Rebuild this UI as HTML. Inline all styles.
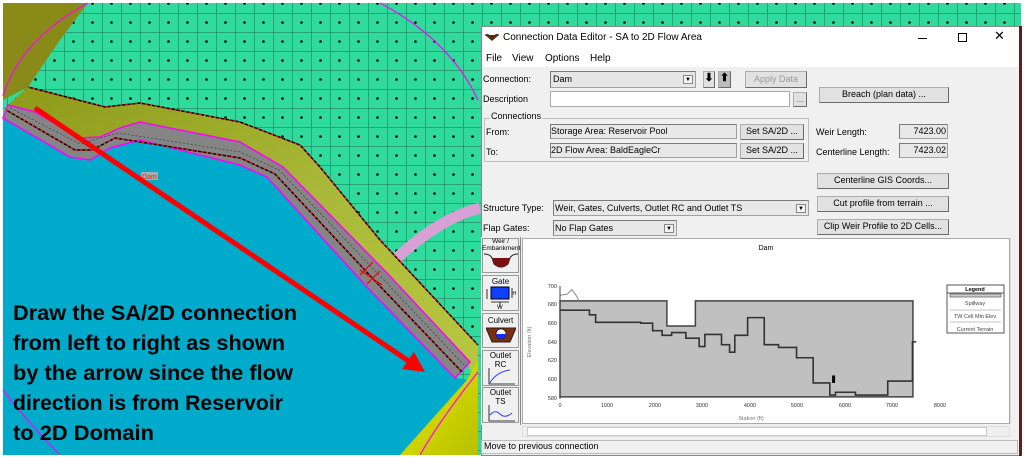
<!DOCTYPE html>
<html><head><meta charset="utf-8"><style>
*{margin:0;padding:0;box-sizing:border-box}
body{width:1024px;height:458px;overflow:hidden;background:#fff;position:relative;font-family:"Liberation Sans",Arial,sans-serif}
.a{position:absolute}
.t{position:absolute;font-size:9px;color:#000;white-space:nowrap;line-height:11px}
.box{position:absolute;background:#e8e8e8;border:1px solid #a0a0a0;border-top-color:#7a7a7a;border-left-color:#7a7a7a}
.btn{position:absolute;background:#e1e1e1;border:1px solid #adadad;border-right-color:#6a6a6a;border-bottom-color:#6a6a6a;font-size:9px;text-align:center;line-height:13px;white-space:nowrap}
.dd{position:absolute;right:2px;top:3px;width:10px;height:9px;border:1px solid #888;background:#f4f4f4;font-size:6px;line-height:8px;text-align:center}
</style></head><body>
<svg class="a" style="left:0;top:0" width="1024" height="458" viewBox="0 0 1024 458">
<defs>
<pattern id="g" patternUnits="userSpaceOnUse" x="64" y="13" width="19" height="19">
<rect width="19" height="19" fill="#2fdb9c"/>
<path d="M0 0H19M0 0V19" stroke="#1f6a4c" stroke-width="1"/>
<circle cx="9.5" cy="9.5" r="1.3" fill="#000"/>
</pattern>
<linearGradient id="ol" x1="0" y1="0" x2="1" y2="1"><stop offset="0" stop-color="#8c9a18"/><stop offset=".5" stop-color="#aab838"/><stop offset="1" stop-color="#b8c840"/></linearGradient>
<linearGradient id="yl" x1="0" y1="0" x2="1" y2="1"><stop offset="0" stop-color="#e8e800"/><stop offset="1" stop-color="#b8c000"/></linearGradient>
</defs>
<rect x="3" y="3" width="1018" height="452" fill="url(#g)"/>
<path d="M480 208 Q440 218 397 258" stroke="#d9a0d6" stroke-width="11" fill="none"/>
<path d="M3 3H88L60 40L28 87L3 100Z" fill="#8a8a18"/>
<path d="M3 96 Q20 40 88 3" stroke="#ff00ff" stroke-width="1.2" fill="none"/>
<path d="M380 3 Q450 40 478 100" stroke="#ff00ff" stroke-width="1.2" fill="none"/>
<path d="M28 87L105 107L140 103L240 122L300 145L320 167L380 240L478 345L478 395L468 362L387 273L283 167L240 142L140 122L120 128L100 137L80 138L35 112L8 105Z" fill="url(#ol)"/>
<path d="M28 87L105 107L140 103L240 122L300 145L320 167L380 240L478 345" stroke="#000" stroke-width="1.5" fill="none"/>
<path d="M28 87L105 107L140 103L240 122L300 145L320 167L380 240L478 345" stroke="#ff2020" stroke-width="1.5" stroke-dasharray="2 3" fill="none"/>
<path d="M3 118L70 157L90 160L110 148L140 140L240 165L267 177L367 287L453 377L467 380L400 455L3 455Z" fill="#00aacb"/>
<path d="M478 360L478 455L400 455L467 380Z" fill="url(#yl)"/>
<path d="M478 372 Q440 420 420 455" stroke="#ff00ff" stroke-width="1.2" fill="none"/>
<path d="M3 390 Q30 425 60 455" stroke="#ff00ff" stroke-width="1.2" fill="none"/>
<path d="M8 105L35 112L80 138L100 137L120 128L140 122L240 142L283 167L387 273L470 362L455 378L367 287L267 177L240 165L140 140L110 148L90 160L70 157L3 118Z" fill="#858585" stroke="#ff00ff" stroke-width="1.5"/>
<path d="M6 110L75 150L92 150L115 138L240 158L275 174L376 282L462 372" stroke="#000" stroke-width="1.5" fill="none"/>
<path d="M6 110L75 150L92 150L115 138L240 158L275 174L376 282L462 372" stroke="#ff2020" stroke-width="1.5" stroke-dasharray="2 3" fill="none"/>
<path d="M10 108L80 144L118 133L240 152L279 170L381 277L465 366" stroke="#333" stroke-width="0.6" stroke-dasharray="2 2" fill="none"/>
<path d="M360 275L373 262M367 284L380 271M360 270L382 285" stroke="#e00" stroke-width="1.2"/>
<rect x="141" y="172" width="17" height="8" fill="#e8b0a8" opacity=".7"/>
<text x="149.5" y="179" font-size="7" fill="#d03020" text-anchor="middle" font-family="Liberation Sans">Dam</text>
<line x1="35" y1="108" x2="410" y2="362" stroke="#ff0000" stroke-width="5"/>
<polygon points="425,372 402,369 414,352" fill="#ff0000"/>
<g font-family="Liberation Sans" font-weight="bold" font-size="21" fill="#000">
<text x="13" y="320" textLength="284" lengthAdjust="spacingAndGlyphs">Draw the SA/2D connection</text>
<text x="13" y="350" textLength="272" lengthAdjust="spacingAndGlyphs">from left to right as shown</text>
<text x="13" y="380" textLength="280" lengthAdjust="spacingAndGlyphs">by the arrow since the flow</text>
<text x="13" y="410" textLength="270" lengthAdjust="spacingAndGlyphs">direction is from Reservoir</text>
<text x="13" y="440" textLength="141" lengthAdjust="spacingAndGlyphs">to 2D Domain</text>
</g>
</svg>

<div class="a" style="left:481px;top:26px;width:540px;height:430px;background:#f0f0f0;border:1px solid #888"></div>
<div class="a" style="left:482px;top:27px;width:538px;height:40px;background:#fff"></div>
<svg class="a" style="left:485px;top:34px" width="14" height="8"><path d="M0 1L14 1L7 7Z" fill="#5a2a10"/><path d="M0 1L4 0M14 1L10 0" stroke="#333"/></svg>
<div class="t" style="left:503px;top:32px;font-size:10px">Connection Data Editor - SA to 2D Flow Area</div>
<div class="a" style="left:918px;top:38px;width:9px;height:1px;background:#000"></div>
<div class="a" style="left:958px;top:33px;width:9px;height:9px;border:1px solid #000"></div>
<div class="t" style="left:994px;top:30px;font-size:13px">✕</div>
<div class="t" style="left:486px;top:53px;font-size:10px">File</div>
<div class="t" style="left:512px;top:53px;font-size:10px">View</div>
<div class="t" style="left:545px;top:53px;font-size:10px">Options</div>
<div class="t" style="left:590px;top:53px;font-size:10px">Help</div>

<div class="t" style="left:483px;top:74px">Connection:</div>
<div class="box" style="left:550px;top:71px;width:146px;height:17px;background:#e6e6e6"><span class="t" style="left:2px;top:2px">Dam</span><div class="dd">▼</div></div>
<div class="btn" style="left:703px;top:71px;width:12px;height:17px;font-weight:bold;font-size:11px">⬇</div>
<div class="btn" style="left:718px;top:71px;width:13px;height:17px;font-weight:bold;font-size:11px;background:#bbb">⬆</div>
<div class="btn" style="left:745px;top:71px;width:62px;height:17px;color:#999;line-height:15px">Apply Data</div>
<div class="t" style="left:483px;top:94px">Description</div>
<div class="a" style="left:550px;top:91px;width:240px;height:16px;background:#fff;border:1px solid #aaa"></div>
<div class="btn" style="left:793px;top:92px;width:14px;height:15px;color:#a0a;font-size:8px">...</div>
<div class="btn" style="left:819px;top:87px;width:130px;height:16px">Breach (plan data) ...</div>

<div class="a" style="left:484px;top:118px;width:325px;height:44px;border:1px solid #c0c0c0"></div>
<div class="t" style="left:490px;top:111px;background:#f0f0f0;padding:0 1px">Connections</div>
<div class="t" style="left:486px;top:127px">From:</div>
<div class="box" style="left:550px;top:124px;width:187px;height:15px"><span class="t" style="left:0;top:1px">Storage Area: Reservoir Pool</span></div>
<div class="btn" style="left:740px;top:124px;width:64px;height:16px">Set SA/2D ...</div>
<div class="t" style="left:486px;top:147px">To:</div>
<div class="box" style="left:550px;top:143px;width:187px;height:15px"><span class="t" style="left:0;top:1px">2D Flow Area: BaldEagleCr</span></div>
<div class="btn" style="left:740px;top:143px;width:64px;height:16px">Set SA/2D ...</div>
<div class="t" style="left:816px;top:127px">Weir Length:</div>
<div class="box" style="left:899px;top:124px;width:49px;height:15px"><span class="t" style="right:1px;top:1px">7423.00</span></div>
<div class="t" style="left:816px;top:147px">Centerline Length:</div>
<div class="box" style="left:899px;top:143px;width:49px;height:15px"><span class="t" style="right:1px;top:1px">7423.02</span></div>
<div class="btn" style="left:817px;top:173px;width:132px;height:16px">Centerline GIS Coords...</div>
<div class="btn" style="left:817px;top:196px;width:132px;height:16px">Cut profile from terrain ...</div>
<div class="btn" style="left:817px;top:219px;width:132px;height:16px">Clip Weir Profile to 2D Cells...</div>
<div class="t" style="left:483px;top:203px">Structure Type:</div>
<div class="box" style="left:553px;top:200px;width:256px;height:16px"><span class="t" style="left:1px;top:2px">Weir, Gates, Culverts, Outlet RC and Outlet TS</span><div class="dd" style="top:3px">▼</div></div>
<div class="t" style="left:483px;top:223px">Flap Gates:</div>
<div class="box" style="left:553px;top:220px;width:124px;height:16px"><span class="t" style="left:1px;top:2px">No Flap Gates</span><div class="dd" style="top:3px">▼</div></div>

<div class="a" style="left:481px;top:237px;width:40px;height:188px;background:#f0f0f0;border-right:1px solid #888"></div>
<div class="a" style="left:482px;top:238px;width:37px;height:35px;border:1px solid #999"></div>
<div class="t" style="left:482px;top:238px;width:37px;text-align:center;font-size:6.5px;line-height:7px">Weir /<br>Embankment</div>
<svg class="a" style="left:484px;top:252px" width="34" height="20"><path d="M0 2Q6 2 8 6L10 12Q17 18 24 12L26 6Q28 2 34 2" stroke="#222" fill="none"/><path d="M8 6L10 12Q17 18 24 12L26 6Z" fill="#7a1010"/></svg>
<div class="a" style="left:482px;top:275px;width:37px;height:36px;border:1px solid #999"></div>
<div class="t" style="left:482px;top:276px;width:37px;text-align:center;font-size:8px">Gate</div>
<svg class="a" style="left:484px;top:285px" width="34" height="25"><rect x="7" y="2" width="18" height="12" fill="#1040ff" stroke="#000"/><path d="M3 4V14M28 3V13M7 17H25M16 17V22" stroke="#000" stroke-width=".8"/><text x="28.5" y="10" font-size="5" font-family="Liberation Sans">H</text><text x="13" y="24" font-size="6" font-family="Liberation Sans">W</text></svg>
<div class="a" style="left:482px;top:313px;width:37px;height:35px;border:1px solid #999"></div>
<div class="t" style="left:482px;top:315px;width:37px;text-align:center;font-size:8px">Culvert</div>
<svg class="a" style="left:486px;top:326px" width="30" height="18"><path d="M0 2H30L24 16H6Z" fill="#7a3010" stroke="#222"/><circle cx="15" cy="8" r="5" fill="#fff" stroke="#000" stroke-width=".6"/><path d="M10 8A5 5 0 0 0 20 8Z" fill="#1030ff"/></svg>
<div class="a" style="left:482px;top:350px;width:37px;height:36px;border:1px solid #999"></div>
<div class="t" style="left:482px;top:351px;width:37px;text-align:center;font-size:8px;line-height:9px">Outlet<br>RC</div>
<svg class="a" style="left:488px;top:368px" width="28" height="17"><path d="M1 0V16H27" stroke="#000" fill="none" stroke-width=".8"/><path d="M2 15Q8 4 22 2" stroke="#3040ff" fill="none"/></svg>
<div class="a" style="left:482px;top:387px;width:37px;height:36px;border:1px solid #999"></div>
<div class="t" style="left:482px;top:388px;width:37px;text-align:center;font-size:8px;line-height:9px">Outlet<br>TS</div>
<svg class="a" style="left:488px;top:405px" width="28" height="17"><path d="M1 0V16H27" stroke="#000" fill="none" stroke-width=".8"/><path d="M2 10Q7 4 12 9T24 8" stroke="#3040ff" fill="none"/></svg>

<div class="a" style="left:522px;top:238px;width:488px;height:186px;background:#fff;border:1px solid #aaa"></div>
<div class="a" style="left:1010px;top:238px;width:10px;height:186px;background:#f0f0f0;border-left:1px solid #ddd"></div>
<div class="a" style="left:522px;top:426px;width:488px;height:11px;background:#f0f0f0;border:1px solid #ddd"></div>
<div class="a" style="left:527px;top:427px;width:460px;height:9px;background:#fff;border:1px solid #ccc"></div>
<div class="a" style="left:481px;top:440px;width:537px;height:14px;background:#f0f0f0;border:1px solid #bbb"></div>
<div class="t" style="left:484px;top:441px;font-size:9px">Move to previous connection</div>
<div class="a" style="left:1019px;top:26px;width:3px;height:430px;background:#5a2020"></div>

<svg class="a" style="left:0;top:0" width="1024" height="458" viewBox="0 0 1024 458">
<text x="766" y="250" font-size="7" text-anchor="middle" font-family="Liberation Sans">Dam</text>
<g transform="matrix(0.0475 0 0 -0.933 560 939)">
<polygon points="0,684 2250,684 2250,657 2850,657 2850,684 7430,684 7430,581 0,581" fill="#c0c0c0" stroke="#444" stroke-width="1.5" vector-effect="non-scaling-stroke"/>
<polyline points="0,690 150,691 250,696 350,689 400,684" fill="none" stroke="#888" stroke-width="1" vector-effect="non-scaling-stroke"/>
<polyline points="0,674 620,674 620,669 750,669 750,661 1700,661 1700,660 1950,660 1950,652 2150,652 2150,647 2350,647 2350,650 2650,650 2650,644 2930,644 2930,635 3050,635 3050,648 3400,648 3400,637 3570,637 3570,629 3680,629 3680,647 3950,647 3950,666 4300,666 4300,637 4600,637 4600,634 4980,634 4980,623 5330,623 5330,596 5680,596 5680,583 5800,583 5800,586 6220,586 6220,583 6900,583 6900,598 7420,598 7420,640 7500,640" fill="none" stroke="#333" stroke-width="1.6" vector-effect="non-scaling-stroke"/>
<line x1="5760" y1="596" x2="5760" y2="604" stroke="#000" stroke-width="3" vector-effect="non-scaling-stroke"/>
</g>
<line x1="560" y1="286" x2="560" y2="399" stroke="#444"/>
<g font-size="5.5" fill="#333" font-family="Liberation Sans" text-anchor="end">
<text x="557" y="288">700</text><text x="557" y="306">680</text><text x="557" y="325">660</text><text x="557" y="344">640</text><text x="557" y="362">620</text><text x="557" y="381">600</text><text x="557" y="400">580</text>
</g>
<g font-size="5.5" fill="#333" font-family="Liberation Sans" text-anchor="middle">
<text x="560" y="407">0</text><text x="607" y="407">1000</text><text x="655" y="407">2000</text><text x="702" y="407">3000</text><text x="750" y="407">4000</text><text x="797" y="407">5000</text><text x="845" y="407">6000</text><text x="892" y="407">7000</text><text x="940" y="407">8000</text>
<text x="751" y="420" fill="#777">Station (ft)</text>
<text transform="translate(531,342) rotate(-90)" fill="#777">Elevation (ft)</text>
</g>
<rect x="947" y="285" width="57" height="48" fill="#fff" stroke="#555"/>
<line x1="947" y1="293" x2="1004" y2="293" stroke="#555"/>
<rect x="950" y="294" width="51" height="3" fill="#ccc" stroke="#444" stroke-width=".6"/>
<line x1="950" y1="310" x2="1001" y2="310" stroke="#888" stroke-width=".6"/>
<line x1="950" y1="322" x2="1001" y2="322" stroke="#888" stroke-width=".6"/>
<g font-size="5.5" font-family="Liberation Sans" text-anchor="middle" fill="#444">
<text x="975" y="291" font-weight="bold" fill="#000">Legend</text>
<text x="975" y="305">Spillway</text><text x="975" y="318">TW Cell Min Elev</text><text x="975" y="331">Current Terrain</text>
</g>
</svg>
</body></html>
